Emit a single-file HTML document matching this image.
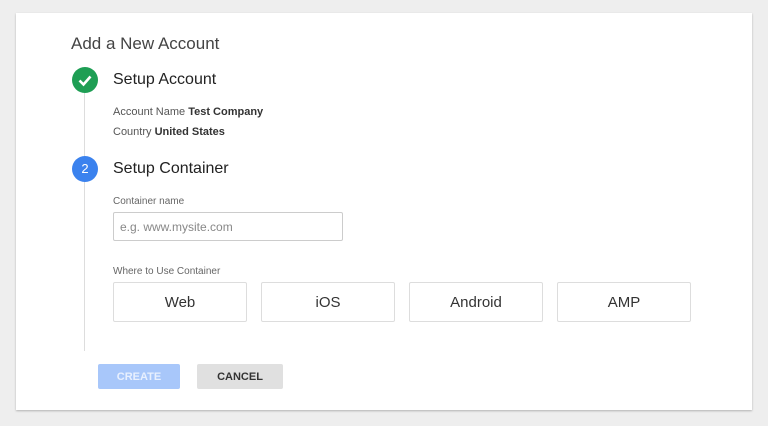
<!DOCTYPE html><html><head><style>
body{margin:0;width:768px;height:426px;background:#eeeeee;font-family:"Liberation Sans",sans-serif;position:relative;overflow:hidden}
.card{position:absolute;left:16px;top:13px;width:736px;height:397px;background:#fff;box-shadow:0 1px 2px rgba(0,0,0,.25)}
.a{position:absolute;white-space:nowrap}
.c{position:absolute;width:26px;height:26px;border-radius:50%;left:72px}
.box{position:absolute;top:282px;width:132px;height:38px;border:1px solid #ddd;border-radius:2px;font-size:15px;color:#333;text-align:center;line-height:40px}
.btn{position:absolute;top:364px;height:25px;line-height:27px;text-align:center;font-size:11px;font-weight:bold;border-radius:2px}
</style></head><body>
<div class="card"></div>
<div class="a" style="left:71px;top:34px;font-size:17px;color:#444">Add a New Account</div>
<div style="position:absolute;left:84px;top:93px;width:1px;height:258px;background:#ddd"></div>
<div class="c" style="top:67px;background:#1e9e54"><svg width="26" height="26"><path d="M7.5 13.5l4 4 7-8" stroke="#fff" stroke-width="2.6" fill="none"/></svg></div>
<div class="a" style="left:113px;top:71px;font-size:16px;color:#222">Setup Account</div>
<div class="a" style="left:113px;top:106px;font-size:11px;color:#555">Account Name <b style="color:#333">Test Company</b></div>
<div class="a" style="left:113px;top:126px;font-size:11px;color:#555">Country <b style="color:#333">United States</b></div>
<div class="c" style="top:156px;background:#3b82ee;color:#fff;font-size:13px;text-align:center;line-height:26px">2</div>
<div class="a" style="left:113px;top:160px;font-size:16px;color:#222">Setup Container</div>
<div class="a" style="left:113px;top:196px;font-size:10px;color:#666">Container name</div>
<div style="position:absolute;left:113px;top:212px;width:228px;height:27px;border:1px solid #ccc;border-radius:2px"></div>
<div class="a" style="left:120px;top:220px;font-size:12px;color:#888">e.g. www.mysite.com</div>
<div class="a" style="left:113px;top:266px;font-size:10px;color:#666">Where to Use Container</div>
<div class="box" style="left:113px">Web</div>
<div class="box" style="left:261px">iOS</div>
<div class="box" style="left:409px">Android</div>
<div class="box" style="left:557px">AMP</div>
<div class="btn" style="left:98px;width:82px;background:#a8c7fa;color:#e8f0fe">CREATE</div>
<div class="btn" style="left:197px;width:86px;background:#e0e0e0;color:#333">CANCEL</div>
</body></html>
